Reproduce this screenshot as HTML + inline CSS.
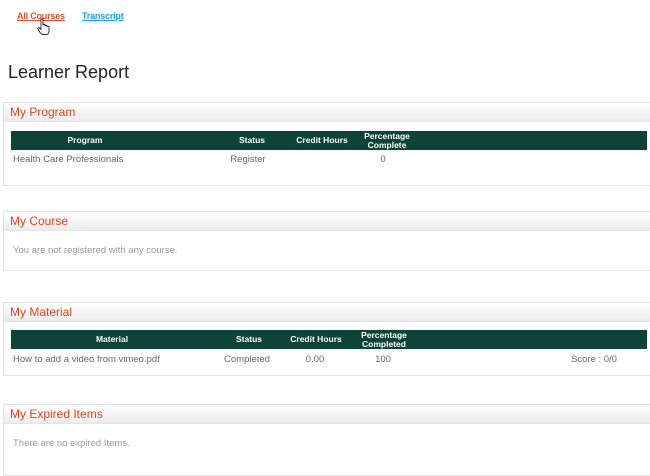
<!DOCTYPE html><html><head><style>
body{margin:0;width:650px;height:459px;overflow:hidden;background:#fff;font-family:"Liberation Sans",sans-serif;position:relative}
.a{position:absolute}
.lnk{font-size:9px;font-weight:bold;text-decoration:underline;top:11px;letter-spacing:-0.2px}
.panel{position:absolute;left:3px;width:660px;border:1px solid #e2e2e2;background:#fff}
.ph{height:18px;background:linear-gradient(#fff,#ececec);border-bottom:1px solid #e4e4e4;color:#e0451c;font-size:12px;line-height:19px;padding-left:6px}
.th{position:absolute;left:7px;width:636px;background:#0d4437;color:#fff;font-size:8.5px;font-weight:bold}
.th span,.row span{position:absolute;text-align:center;transform:translateX(-50%);white-space:nowrap}
.row{position:absolute;left:0;font-size:9.5px;color:#666}
.muted{position:absolute;left:9px;font-size:9.5px;color:#999}
</style></head><body>
<div class="a lnk" style="left:17px;color:#e0502c">All Courses</div>
<div class="a lnk" style="left:82px;color:#1ea0e0">Transcript</div>
<svg class="a" style="left:37px;top:18px" width="14" height="17" viewBox="0 0 14 17"><path d="M4 1.5c0-1 2-1 2 0V7c0-1 2-1 2 0v1c0-1 2-1 2 0v1c0-1 2-1 2 0v4c0 2-1 3.5-3 3.5H6c-1.5 0-2-.8-3-2L1 11c-.7-1 .6-2 1.5-1L4 11.5z" fill="#fff" stroke="#222" stroke-width="0.9"/></svg>
<div class="a" style="left:8px;top:62px;font-size:18px;color:#222">Learner Report</div>

<div class="panel" style="top:102px;height:82px">
<div class="ph">My Program</div>
<div class="th" style="top:28px;height:19px;line-height:19px">
<span style="left:74px">Program</span><span style="left:241px">Status</span><span style="left:311px">Credit Hours</span><span style="left:376px;line-height:9px;top:1px">Percentage<br>Complete</span></div>
<div class="row" style="top:51px;width:660px"><span style="transform:none;left:9px">Health Care Professionals</span><span style="left:244px">Register</span><span style="left:379px">0</span></div>
</div>

<div class="panel" style="top:211px;height:58px">
<div class="ph">My Course</div>
<div class="muted" style="top:33px">You are not registered with any course.</div>
</div>

<div class="panel" style="top:302px;height:72px">
<div class="ph">My Material</div>
<div class="th" style="top:27px;height:19px;line-height:19px">
<span style="left:101px">Material</span><span style="left:238px">Status</span><span style="left:305px">Credit Hours</span><span style="left:373px;line-height:9px;top:1px">Percentage<br>Completed</span></div>
<div class="row" style="top:51px;width:660px"><span style="transform:none;left:9px">How to add a video from vimeo.pdf</span><span style="left:243px">Completed</span><span style="left:311px">0.00</span><span style="left:379px">100</span><span style="left:590px">Score : 0/0</span></div>
</div>

<div class="panel" style="top:404px;height:70px">
<div class="ph">My Expired Items</div>
<div class="muted" style="top:33px">There are no expired Items.</div>
</div>
</body></html>
